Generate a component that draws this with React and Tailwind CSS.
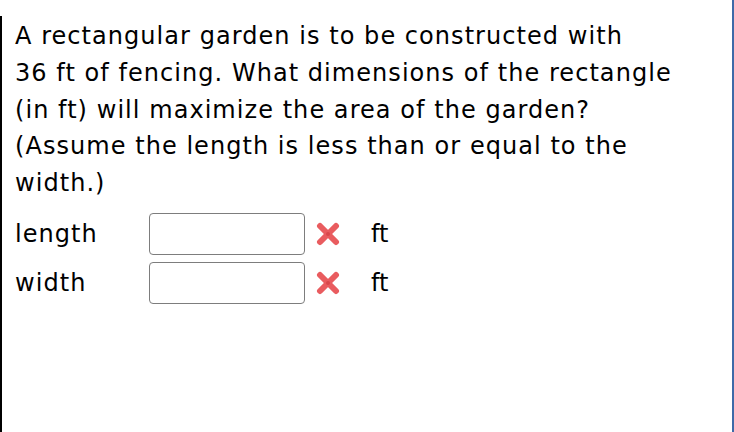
import React from "react";

// red "incorrect" mark next to each answer box
const WrongMark = () => (
  <svg width="26" height="24" viewBox="0 0 26 24" className="shrink-0">
    <g stroke="#e95c5f" strokeWidth="6" strokeLinecap="round">
      <line x1="5" y1="4" x2="21" y2="20" />
      <line x1="21" y1="4" x2="5" y2="20" />
    </g>
    <circle cx="13" cy="12" r="2" fill="#d9474b" />
  </svg>
);

const AnswerRow = ({ label }) => (
  <div className="flex items-center h-[49px]">
    <span className="w-[134px]">{label}</span>
    <input
      type="text"
      className="w-[156px] h-[42px] rounded-[4px] border border-[#7d7d7d] bg-white outline-none"
    />
    <span className="ml-[10px] mr-[30px] flex items-center">
      <WrongMark />
    </span>
    <span className="tracking-normal">ft</span>
  </div>
);

export default function App() {
  return (
    <div className="w-[734px] h-[432px] bg-white flex overflow-hidden">
      <div className="flex-1 pt-[16px]">
        <div
          className="h-[416px] border-l-2 border-black pl-[13px] pt-[2px] text-[24px] leading-[36.75px] tracking-[1.05px] text-black"
          style={{ fontFamily: "Verdana, 'DejaVu Sans', sans-serif" }}
        >
          <p>
            A rectangular garden is to be constructed with
            <br />
            36 ft of fencing. What dimensions of the rectangle
            <br />
            (in ft) will maximize the area of the garden?
            <br />
            (Assume the length is less than or equal to the
            <br />
            width.)
          </p>
          <div className="mt-[8px]">
            <AnswerRow label="length" />
            <AnswerRow label="width" />
          </div>
        </div>
      </div>
      <div className="w-[2px] bg-[#3f6aa8]" />
    </div>
  );
}
